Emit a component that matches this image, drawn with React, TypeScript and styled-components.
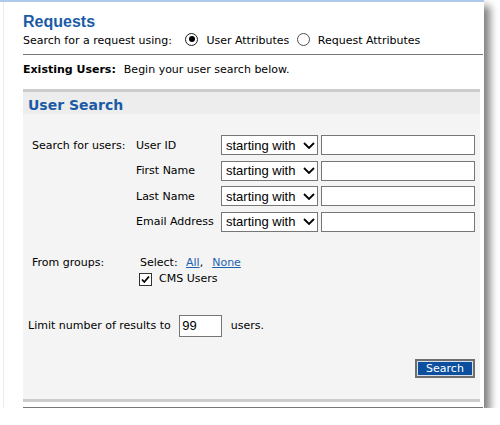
import React from "react";
import styled, { createGlobalStyle } from "styled-components";

const GlobalStyle = createGlobalStyle`
  html, body { margin: 0; padding: 0; background: #fff; }
  body {
    font-family: "DejaVu Sans", Verdana, sans-serif;
    font-size: 11px;
    color: #000;
  }
`;

const Frame = styled.div`
  width: 484px;
  box-sizing: border-box;
  background: #fff;
  border-top: 2px solid #afc9ea;
  box-shadow: 6px 6px 8px rgba(0, 0, 0, 0.5);
`;

const Sheet = styled.div`
  margin-left: 3px;
  border-left: 1px solid #ececec;
  padding: 0 1px 0 19px;
  display: flex;
  flex-direction: column;
`;

const Title = styled.h1`
  margin: 10.5px 0 0;
  font: bold 16px/18px "Liberation Sans", Arial, sans-serif;
  color: #1b5ba6;
`;

const ModeRow = styled.div`
  margin-top: 2px;
  height: 16px;
  line-height: 16px;
  display: flex;
  align-items: center;
`;

const RadioGroup = styled.div`
  display: flex;
  align-items: center;
  gap: 7.5px;
  margin-left: 13.5px;
`;

const RadioOption = styled.label`
  display: flex;
  align-items: center;
  gap: 8px;
`;

const RadioMark = styled.span<{ $checked?: boolean }>`
  width: 13px;
  height: 13px;
  box-sizing: border-box;
  border-radius: 50%;
  border: 1px solid ${(p) => (p.$checked ? "#1a1a1a" : "#505050")};
  background: #fff;
  display: inline-flex;
  align-items: center;
  justify-content: center;
  margin-bottom: 3px;
  &::after {
    content: "";
    width: 6px;
    height: 6px;
    border-radius: 50%;
    background: #000;
    display: ${(p) => (p.$checked ? "block" : "none")};
  }
`;

const Rule = styled.div<{ $top: number }>`
  margin-top: ${(p) => p.$top}px;
  height: 1px;
  background: #777;
`;

const Intro = styled.div`
  margin-top: 7px;
  line-height: 16px;
  display: flex;
`;

const IntroLabel = styled.strong`
  font-weight: bold;
  margin-right: 8px;
`;

const Panel = styled.section`
  margin: 11.5px 3px 0 0;
  border-top: 3px solid #cccccc;
  border-bottom: 3px solid #cccccc;
`;

const PanelHeader = styled.h2`
  margin: 0;
  height: 22px;
  box-sizing: border-box;
  padding: 5px 0 0 5px;
  background: #ededed;
  font: bold 14px/17px "DejaVu Sans", Verdana, sans-serif;
  color: #1b5ba6;
`;

const PanelBody = styled.div`
  background: #f4f4f4;
  padding: 21px 5px 21px 5px;
  display: flex;
  flex-direction: column;
`;

const SearchGrid = styled.div`
  margin-left: 4px;
  display: grid;
  grid-template-columns: 104px 85px 97px 157px;
  grid-auto-rows: 20px;
  row-gap: 5.6px;
  align-items: center;
`;

const Cell = styled.span`
  white-space: nowrap;
`;

const SelectWrap = styled.span`
  position: relative;
  display: inline-block;
  width: 97px;
  height: 20px;
`;

const Select = styled.select`
  appearance: none;
  -webkit-appearance: none;
  width: 100%;
  height: 100%;
  box-sizing: border-box;
  border: 1px solid #767676;
  border-radius: 0;
  background: #fff;
  font: 13px "Liberation Sans", Arial, sans-serif;
  color: #000;
  padding: 0 0 0 4px;
  margin: 0;
  outline: none;
`;

const Chevron = styled.svg`
  position: absolute;
  right: 3px;
  top: 50%;
  margin-top: -3.5px;
  width: 12px;
  height: 7px;
  pointer-events: none;
`;

const TextInput = styled.input<{ $w: number; $h: number; $ml?: number }>`
  width: ${(p) => p.$w}px;
  height: ${(p) => p.$h}px;
  margin: 0 0 0 ${(p) => p.$ml ?? 0}px;
  box-sizing: border-box;
  border: 1px solid #767676;
  border-radius: 0;
  padding: 0 2px;
  background: #fff;
  font: 13px "Liberation Sans", Arial, sans-serif;
  color: #000;
  outline: none;
`;

const Groups = styled.div`
  margin: 23.4px 0 0 4px;
  display: grid;
  grid-template-columns: 108px 1fr;
  grid-auto-rows: 16px;
  line-height: 16px;
  align-items: center;
`;

const GroupChoices = styled.span`
  display: flex;
  align-items: center;
  white-space: nowrap;
`;

const SelectLabel = styled.span`
  margin-right: 8.4px;
`;

const Link = styled.a`
  color: #1a62b0;
  text-decoration: underline;
  cursor: pointer;
`;

const Comma = styled.span`
  margin-right: 9px;
`;

const CheckRow = styled.label`
  display: flex;
  align-items: center;
  gap: 7px;
  margin-left: -1px;
`;

const CheckBox = styled.span`
  width: 13px;
  height: 13px;
  box-sizing: border-box;
  border: 1px solid #333;
  background: #fff;
  display: inline-flex;
  align-items: center;
  justify-content: center;
`;

const LimitRow = styled.div`
  margin-top: 27.8px;
  height: 22px;
  display: flex;
  align-items: center;
  gap: 8.5px;
  white-space: nowrap;
`;

const ButtonRow = styled.div`
  margin-top: 22px;
  display: flex;
  justify-content: flex-end;
`;

const SearchButton = styled.button`
  width: 60px;
  height: 19px;
  box-sizing: border-box;
  border: 2px solid #6e6e6e;
  box-shadow: inset 0 0 0 1px #d5e0ef;
  background: #0d4f9f;
  color: #fff;
  font: 11px/15px "DejaVu Sans", Verdana, sans-serif;
  padding: 0;
  margin: 0;
  cursor: pointer;
`;

const StartSelect = () => (
  <SelectWrap>
    <Select defaultValue="starting">
      <option value="starting">starting with</option>
      <option value="containing">containing</option>
    </Select>
    <Chevron viewBox="0 0 12 7">
      <polyline points="1,1 6,6 11,1" fill="none" stroke="#000" strokeWidth="1.8" />
    </Chevron>
  </SelectWrap>
);

const fields = ["User ID", "First Name", "Last Name", "Email Address"];

export default function App() {
  return (
    <>
      <GlobalStyle />
      <Frame>
        <Sheet>
          <Title>Requests</Title>
          <ModeRow>
            <span>Search for a request using:</span>
            <RadioGroup>
              <RadioOption>
                <RadioMark $checked />
                <span>User Attributes</span>
              </RadioOption>
              <RadioOption>
                <RadioMark />
                <span>Request Attributes</span>
              </RadioOption>
            </RadioGroup>
          </ModeRow>
          <Rule $top={5} />
          <Intro>
            <IntroLabel>Existing Users:</IntroLabel>
            <span>Begin your user search below.</span>
          </Intro>
          <Panel>
            <PanelHeader>User Search</PanelHeader>
            <PanelBody>
              <SearchGrid>
                {fields.map((f, i) => (
                  <React.Fragment key={f}>
                    <Cell>{i === 0 ? "Search for users:" : ""}</Cell>
                    <Cell>{f}</Cell>
                    <StartSelect />
                    <TextInput $w={154} $h={20} $ml={3} />
                  </React.Fragment>
                ))}
              </SearchGrid>
              <Groups>
                <Cell>From groups:</Cell>
                <GroupChoices>
                  <SelectLabel>Select:</SelectLabel>
                  <Link>All</Link>
                  <Comma>,</Comma>
                  <Link>None</Link>
                </GroupChoices>
                <span />
                <CheckRow>
                  <CheckBox>
                    <svg width="11" height="11" viewBox="0 0 11 11">
                      <polyline points="2,5.5 4.3,8 9,2.5" fill="none" stroke="#000" strokeWidth="1.8" />
                    </svg>
                  </CheckBox>
                  <span>CMS Users</span>
                </CheckRow>
              </Groups>
              <LimitRow>
                <span>Limit number of results to</span>
                <TextInput $w={43} $h={22} defaultValue="99" />
                <span>users.</span>
              </LimitRow>
              <ButtonRow>
                <SearchButton>Search</SearchButton>
              </ButtonRow>
            </PanelBody>
          </Panel>
          <Rule $top={5} />
        </Sheet>
      </Frame>
    </>
  );
}
